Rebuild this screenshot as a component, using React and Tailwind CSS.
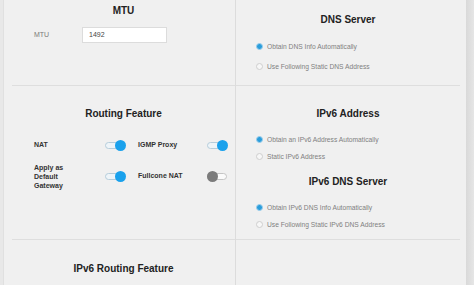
import React from "react";

function Heading({ children, className = "" }) {
  return (
    <div className={`text-center text-[10px] leading-[12px] font-bold text-[#222] ${className}`}>
      {children}
    </div>
  );
}

function Radio({ checked, label, className = "" }) {
  return (
    <div className={`flex items-center h-[12px] pl-[20px] ${className}`}>
      {checked ? (
        <span className="w-[7px] h-[7px] rounded-full border border-[#9fd0ec] bg-[#2a9ddb] shrink-0" />
      ) : (
        <span className="w-[7px] h-[7px] rounded-full border border-[#cfcfcf] bg-[#f7f7f7] shrink-0" />
      )}
      <span className="ml-[4px] text-[6.7px] leading-[9px] text-[#808080] whitespace-nowrap">{label}</span>
    </div>
  );
}

function Toggle({ on }) {
  return (
    <div className="relative w-[21px] h-[11px] flex items-center shrink-0">
      <div
        className={`w-[20px] h-[7px] rounded-full border ${
          on ? "border-[#b5cddb] bg-[#eef4f8]" : "border-[#c4c4c4] bg-[#fafafa]"
        }`}
      />
      <div
        className={`absolute top-0 w-[11px] h-[11px] rounded-full ${
          on ? "right-0 bg-[#1aa1ec]" : "left-0 bg-[#7b7b7b]"
        }`}
      />
    </div>
  );
}

export default function App() {
  return (
    <div
      className="w-[474px] h-[285px] overflow-hidden flex bg-[#f0f0f0]"
      style={{ fontFamily: '"Liberation Sans", Arial, sans-serif' }}
    >
      <div className="w-[4px] bg-[#e8e8e8] border-r border-[#e0e0e0]" />
      <div className="flex-1 flex pl-[8px] pr-[6px]">
        {/* Left column */}
        <div className="w-[224px] border-r border-[#dcdcdc] flex flex-col">
          <section className="h-[86px] border-b border-[#dedede] pt-[5px]">
            <Heading>MTU</Heading>
            <div className="flex items-center mt-[10px]">
              <span className="ml-[22px] w-[48px] text-[7px] text-[#7a7a7a]">MTU</span>
              <div className="w-[85px] h-[16px] bg-white border border-[#dcdcdc] flex items-center pl-[6px] text-[7px] text-[#444]">
                1492
              </div>
            </div>
          </section>
          <section className="h-[154px] border-b border-[#dedede] pt-[22px]">
            <Heading>Routing Feature</Heading>
            <div className="flex items-center h-[12px] mt-[19px] pl-[22px]">
              <span className="w-[71px] text-[7px] font-bold text-[#333]">NAT</span>
              <Toggle on />
              <span className="ml-[12px] w-[69px] text-[7px] font-bold text-[#333]">IGMP Proxy</span>
              <Toggle on />
            </div>
            <div className="flex items-center mt-[12px] pl-[22px]">
              <span className="w-[71px] text-[7px] leading-[9px] font-bold text-[#333]">
                Apply as
                <br />
                Default
                <br />
                Gateway
              </span>
              <Toggle on />
              <span className="ml-[12px] w-[69px] text-[7px] font-bold text-[#333]">Fullcone NAT</span>
              <Toggle on={false} />
            </div>
          </section>
          <section className="flex-1 pt-[23px]">
            <Heading>IPv6 Routing Feature</Heading>
          </section>
        </div>
        {/* Right column */}
        <div className="flex-1 flex flex-col">
          <section className="h-[86px] border-b border-[#dedede] pt-[14px]">
            <Heading>DNS Server</Heading>
            <Radio checked label="Obtain DNS Info Automatically" className="mt-[14px]" />
            <Radio label="Use Following Static DNS Address" className="mt-[8px]" />
          </section>
          <section className="h-[154px] border-b border-[#dedede] pt-[22px]">
            <Heading>IPv6 Address</Heading>
            <Radio checked label="Obtain an IPv6 Address Automatically" className="mt-[13px]" />
            <Radio label="Static IPv6 Address" className="mt-[5px]" />
            <Heading className="mt-[14px]">IPv6 DNS Server</Heading>
            <Radio checked label="Obtain IPv6 DNS Info Automatically" className="mt-[13px]" />
            <Radio label="Use Following Static IPv6 DNS Address" className="mt-[5px]" />
          </section>
          <section className="flex-1" />
        </div>
      </div>
      <div className="w-[8px] bg-gradient-to-r from-[#d9d9d9] to-[#e6e6e6]" />
    </div>
  );
}
